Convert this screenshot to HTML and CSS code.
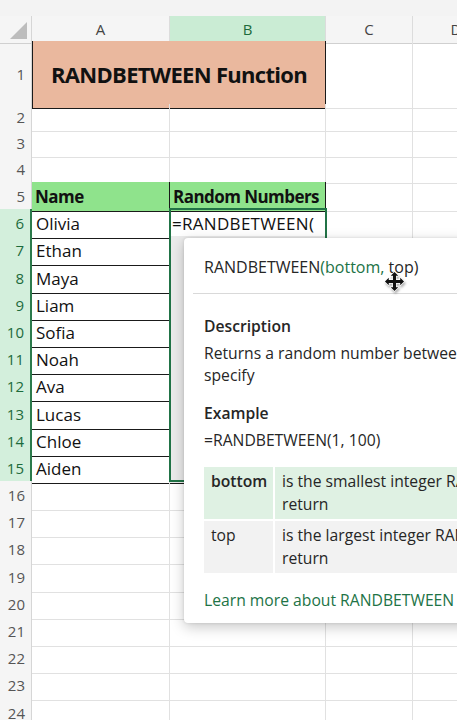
FILE: index.html
```html
<!DOCTYPE html>
<html lang="en">
<head>
    <meta charset="UTF-8">
    <meta name="viewport" content="width=device-width, initial-scale=1.0">
    <title>RANDBETWEEN Function</title>
    <link rel="stylesheet" href="styles.css">
</head>
<body>
    <div class="sheet">
        <div class="top-edge"></div>

        <!-- column letters -->
        <div class="row col-heads">
            <div class="corner"><span class="corner-mark"></span></div>
            <div class="col-head">A</div>
            <div class="col-head sel">B</div>
            <div class="col-head">C</div>
            <div class="col-head">D</div>
        </div>

        <div class="row tall">
            <div class="rh">1</div>
            <div class="cell title">RANDBETWEEN Function</div>
            <div class="cell"></div>
            <div class="cell"></div>
        </div>
        <div class="row short">
            <div class="rh">2</div>
            <div class="cell"></div><div class="cell"></div><div class="cell"></div><div class="cell"></div>
        </div>
        <div class="row short">
            <div class="rh">3</div>
            <div class="cell"></div><div class="cell"></div><div class="cell"></div><div class="cell"></div>
        </div>
        <div class="row short">
            <div class="rh">4</div>
            <div class="cell edge"></div><div class="cell edge"></div><div class="cell"></div><div class="cell"></div>
        </div>

        <!-- data table -->
        <div class="row">
            <div class="rh">5</div>
            <div class="cell data head-cell">Name</div>
            <div class="cell data head-cell">Random Numbers</div>
            <div class="cell"></div><div class="cell"></div>
        </div>
        <div class="row">
            <div class="rh sel">6</div>
            <div class="cell data">Olivia</div>
            <div class="cell data formula">=RANDBETWEEN(</div>
            <div class="cell"></div><div class="cell"></div>
        </div>
        <div class="row">
            <div class="rh sel">7</div>
            <div class="cell data">Ethan</div>
            <div class="cell data picked"></div>
            <div class="cell"></div><div class="cell"></div>
        </div>
        <div class="row">
            <div class="rh sel">8</div>
            <div class="cell data">Maya</div>
            <div class="cell data picked"></div>
            <div class="cell"></div><div class="cell"></div>
        </div>
        <div class="row">
            <div class="rh sel">9</div>
            <div class="cell data">Liam</div>
            <div class="cell data picked"></div>
            <div class="cell"></div><div class="cell"></div>
        </div>
        <div class="row">
            <div class="rh sel">10</div>
            <div class="cell data">Sofia</div>
            <div class="cell data picked"></div>
            <div class="cell"></div><div class="cell"></div>
        </div>
        <div class="row">
            <div class="rh sel">11</div>
            <div class="cell data">Noah</div>
            <div class="cell data picked"></div>
            <div class="cell"></div><div class="cell"></div>
        </div>
        <div class="row">
            <div class="rh sel">12</div>
            <div class="cell data">Ava</div>
            <div class="cell data picked"></div>
            <div class="cell"></div><div class="cell"></div>
        </div>
        <div class="row">
            <div class="rh sel">13</div>
            <div class="cell data">Lucas</div>
            <div class="cell data picked"></div>
            <div class="cell"></div><div class="cell"></div>
        </div>
        <div class="row">
            <div class="rh sel">14</div>
            <div class="cell data">Chloe</div>
            <div class="cell data picked"></div>
            <div class="cell"></div><div class="cell"></div>
        </div>
        <div class="row">
            <div class="rh sel">15</div>
            <div class="cell data">Aiden</div>
            <div class="cell data picked"></div>
            <div class="cell"></div><div class="cell"></div>
        </div>

        <div class="row"><div class="rh">16</div><div class="cell"></div><div class="cell"></div><div class="cell"></div><div class="cell"></div></div>
        <div class="row"><div class="rh">17</div><div class="cell"></div><div class="cell"></div><div class="cell"></div><div class="cell"></div></div>
        <div class="row"><div class="rh">18</div><div class="cell"></div><div class="cell"></div><div class="cell"></div><div class="cell"></div></div>
        <div class="row"><div class="rh">19</div><div class="cell"></div><div class="cell"></div><div class="cell"></div><div class="cell"></div></div>
        <div class="row"><div class="rh">20</div><div class="cell"></div><div class="cell"></div><div class="cell"></div><div class="cell"></div></div>
        <div class="row"><div class="rh">21</div><div class="cell"></div><div class="cell"></div><div class="cell"></div><div class="cell"></div></div>
        <div class="row"><div class="rh">22</div><div class="cell"></div><div class="cell"></div><div class="cell"></div><div class="cell"></div></div>
        <div class="row"><div class="rh">23</div><div class="cell"></div><div class="cell"></div><div class="cell"></div><div class="cell"></div></div>
        <div class="row"><div class="rh">24</div><div class="cell"></div><div class="cell"></div><div class="cell"></div><div class="cell"></div></div>

        <!-- selected range B6:B15 -->
        <div class="range"></div>

        <!-- formula hint card -->
        <div class="tip">
            <div class="tip-sig">RANDBETWEEN<span class="arg">(bottom,</span> top)</div>
            <div class="tip-body">
                <div class="tip-label">Description</div>
                <div class="tip-text">Returns a random number between the numbers you<br>specify</div>

                <div class="tip-label gap">Example</div>
                <div class="tip-text">=RANDBETWEEN(1, 100)</div>

                <div class="args">
                    <div class="arg-row first">
                        <div class="arg-name">bottom</div>
                        <div class="arg-desc">is the smallest integer RANDBETWEEN will<br>return</div>
                    </div>
                    <div class="arg-row">
                        <div class="arg-name plain">top</div>
                        <div class="arg-desc">is the largest integer RANDBETWEEN will<br>return</div>
                    </div>
                </div>

                <a class="tip-link" href="#">Learn more about RANDBETWEEN</a>
            </div>
        </div>

        <svg class="move-cursor" viewBox="0 0 22 22" xmlns="http://www.w3.org/2000/svg">
            <path d="M11 1L15 5H12.6V9.4H17V7L21 11L17 15V12.6H12.6V17H15L11 21L7 17H9.4V12.6H5V15L1 11L5 7V9.4H9.4V5H7Z" fill="#111" stroke="#fff" stroke-width="1.3" stroke-linejoin="round" paint-order="stroke"/>
        </svg>
    </div>
</body>
</html>
```

FILE: styles.css
```css
body {
    margin: 0;
    background: #fff;
    font-family: "Open Sans", "Noto Sans", sans-serif;
    overflow: hidden;
}

.sheet {
    position: relative;
    width: 457px;
    height: 720px;
    overflow: hidden;
}

.top-edge {
    height: 16px;
    background: #f3f3f3;
}

.row {
    display: grid;
    grid-template-columns: 32px 138px 156px 87px 87px;
    height: 27.2px;
}

.row.tall {
    height: 63px;
}

.row.short {
    height: 26px;
}

/* headers */
.col-heads {
    height: 25px;
}

.corner {
    position: relative;
    background: #f5f5f5;
    border-right: 1px solid #d6d6d6;
    border-bottom: 1px solid #d0d0d0;
}

.corner-mark {
    position: absolute;
    right: 4px;
    bottom: 4px;
    width: 0;
    height: 0;
    border-left: 17px solid transparent;
    border-bottom: 17px solid #bdbdbd;
}

.col-head {
    box-sizing: border-box;
    background: #f5f5f5;
    border-right: 1px solid #dcdcdc;
    border-bottom: 1px solid #d0d0d0;
    text-align: center;
    font-size: 15px;
    line-height: 26px;
    color: #444;
}

.col-head.sel {
    background: #caecd4;
    color: #1d6b3c;
    border-bottom: 2px solid #217346;
}

.rh {
    box-sizing: border-box;
    background: #f5f5f5;
    border-right: 1px solid #d6d6d6;
    border-bottom: 1px solid #e6e6e6;
    text-align: right;
    padding-right: 6px;
    font-size: 15px;
    line-height: 29px;
    color: #555;
}

.short .rh {
    line-height: 27px;
}

.tall .rh {
    line-height: 67px;
}

.rh.sel {
    background: #d3efdc;
    color: #1d6b3c;
    border-right: 2px solid #2b7a4b;
    border-bottom-color: #c3e3cd;
}

/* cells */
.cell {
    box-sizing: border-box;
    border-right: 1px solid #e1e1e1;
    border-bottom: 1px solid #e1e1e1;
    padding-left: 4px;
    font-size: 17px;
    line-height: 29px;
    color: #111;
    white-space: nowrap;
    overflow: hidden;
}

.cell.title {
    grid-column: span 2;
    background: #eab89e;
    border: 1px solid #1a1a1a;
    border-top: 0;
    padding: 0;
    text-align: center;
    font-size: 22px;
    font-weight: 700;
    letter-spacing: -0.7px;
    line-height: 66px;
}

.cell.edge {
    border-bottom-color: #1a1a1a;
}

.cell.data {
    border-right-color: #1a1a1a;
    border-bottom: 1.5px solid #1a1a1a;
}

.cell.head-cell {
    background: #8fe38c;
    font-weight: 700;
    letter-spacing: -0.55px;
    padding-left: 3px;
}

.cell.formula {
    padding-left: 2px;
    letter-spacing: 0.3px;
    border-bottom: 2px solid #217346;
}

.cell.picked {
    background: #ebebeb;
}

.range {
    position: absolute;
    left: 169px;
    top: 208px;
    width: 158px;
    height: 274px;
    box-sizing: border-box;
    border: 2px solid #217346;
}

/* formula hint card */
.tip {
    position: absolute;
    left: 184px;
    top: 238px;
    width: 330px;
    height: 385px;
    background: #fff;
    border-radius: 4px;
    box-shadow: 0 4px 14px rgba(0, 0, 0, 0.22), 0 0 3px rgba(0, 0, 0, 0.12);
    font-size: 15.7px;
    color: #262626;
    white-space: nowrap;
}

.tip-sig {
    margin-left: 9px;
    padding: 18px 0 15px 11px;
    font-size: 16px;
    line-height: 22px;
    border-bottom: 1px solid #d9d9d9;
}

.tip-sig .arg {
    color: #217346;
}

.tip-body {
    padding: 21px 0 0 20px;
}

.tip-label {
    font-weight: 600;
    line-height: 22px;
}

.tip-label.gap {
    margin-top: 16px;
}

.tip-text {
    margin-top: 5px;
    line-height: 22px;
}

.args {
    margin-top: 16px;
}

.arg-row {
    display: grid;
    grid-template-columns: 69px 1fr;
    column-gap: 2px;
    margin-bottom: 2px;
}

.arg-row > div {
    padding: 3px 7px;
    line-height: 23px;
    background: #f2f2f2;
}

.arg-row.first > div {
    background: #dff1e3;
}

.arg-name {
    font-weight: 600;
}

.arg-name.plain {
    font-weight: 400;
}

.tip-link {
    display: block;
    margin-top: 16px;
    line-height: 22px;
    color: #217346;
    text-decoration: none;
}

.move-cursor {
    position: absolute;
    left: 384px;
    top: 271px;
    width: 21px;
    height: 21px;
    filter: drop-shadow(1px 2px 1px rgba(0, 0, 0, 0.3));
}
```
